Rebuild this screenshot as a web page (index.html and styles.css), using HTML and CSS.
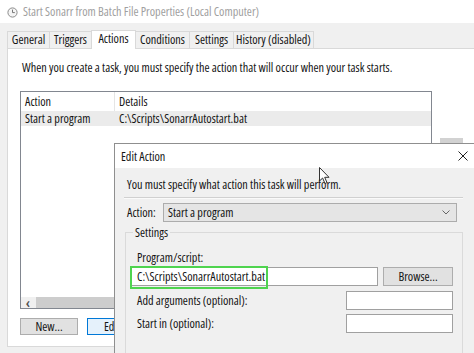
FILE: index.html
```html
<!DOCTYPE html>
<html lang="en">
<head>
    <meta charset="UTF-8">
    <title>Start Sonarr from Batch File Properties</title>
    <link rel="stylesheet" href="styles.css">
</head>
<body>
    <div class="window">
        <div class="titlebar">
            <svg class="clock" width="11" height="11" viewBox="0 0 11 11">
                <circle cx="5.5" cy="5.5" r="4.6" fill="#f4f4f4" stroke="#8a8a8a" stroke-width="1"/>
                <path d="M5.5 2.6 V5.6 H7.8" fill="none" stroke="#777" stroke-width="1"/>
            </svg>
            <span>Start Sonarr from Batch File Properties (Local Computer)</span>
        </div>

        <div class="tabs">
            <div class="tab w-general">General</div>
            <div class="tab w-triggers">Triggers</div>
            <div class="tab active w-actions">Actions</div>
            <div class="tab w-conditions">Conditions</div>
            <div class="tab w-settings">Settings</div>
            <div class="tab w-history">History (disabled)</div>
        </div>

        <div class="panel">
            <p class="intro">When you create a task, you must specify the action that will occur when your task starts.</p>

            <div class="listview">
                <div class="list-header">
                    <div class="col col-action">Action</div>
                    <div class="col col-details">Details</div>
                </div>
                <div class="list-row selected">
                    <div class="col col-action">Start a program</div>
                    <div class="col col-details">C:\Scripts\SonarrAutostart.bat</div>
                </div>
                <div class="list-fill"></div>
                <div class="hscroll">
                    <span class="arrow">&lsaquo;</span>
                    <span class="thumb"></span>
                </div>
            </div>

            <div class="buttons">
                <div class="button">New...</div>
                <div class="button default">Edit...</div>
            </div>

            <!-- top of the move button, mostly hidden by the dialog -->
            <div class="side-button"></div>
        </div>
    </div>

    <div class="dialog">
        <div class="dlg-title">
            <span>Edit Action</span>
            <svg class="close" width="10" height="10" viewBox="0 0 10 10">
                <path d="M0.5 0.5 L9.5 9.5 M9.5 0.5 L0.5 9.5" stroke="#222" stroke-width="1"/>
            </svg>
        </div>
        <div class="dlg-body">
            <p class="dlg-intro">You must specify what action this task will perform.</p>
            <div class="separator"></div>

            <div class="action-row">
                <span class="label">Action:</span>
                <div class="combo">
                    <span>Start a program</span>
                    <svg width="8" height="5" viewBox="0 0 8 5">
                        <path d="M0.5 0.5 L4 4 L7.5 0.5" fill="none" stroke="#666" stroke-width="1"/>
                    </svg>
                </div>
            </div>

            <fieldset class="group">
                <legend>Settings</legend>
                <div class="field-label">Program/script:</div>
                <div class="program-row">
                    <div class="textbox program">C:\Scripts\SonarrAutostart.bat</div>
                    <div class="button browse">Browse...</div>
                    <div class="highlight"></div>
                </div>
                <div class="opt-row">
                    <span>Add arguments (optional):</span>
                    <div class="textbox small"></div>
                </div>
                <div class="opt-row">
                    <span>Start in (optional):</span>
                    <div class="textbox small"></div>
                </div>
            </fieldset>
        </div>
    </div>

    <svg class="cursor" width="12" height="18" viewBox="0 0 12 18">
        <path d="M0.5 0.5 L0.5 14 L3.6 11 L6 16.5 L8 15.6 L5.7 10.3 L10 10.3 Z" fill="#fff" stroke="#333" stroke-width="1"/>
    </svg>
</body>
</html>
```

FILE: styles.css
```css
/* styles.css */

body {
    margin: 0;
    width: 474px;
    height: 353px;
    overflow: hidden;
    position: relative;
    background-color: #f0f0f0;
    font-family: 'Open Sans', 'Noto Sans', sans-serif;
    font-stretch: 75%;
    font-size: 12.2px;
    color: #141414;
}

p {
    margin: 0;
}

.titlebar {
    height: 23px;
    background-color: #fff;
    display: flex;
    align-items: center;
    gap: 5px;
    padding-left: 7px;
    color: #a0a0a0;
    font-size: 12.2px;
}

.clock {
    margin-top: 1px;
}

.tabs {
    display: flex;
    align-items: flex-end;
    margin: 8px 0 0 7px;
    height: 17px;
}

.tab {
    box-sizing: border-box;
    height: 17px;
    line-height: 15px;
    text-align: center;
    background-color: #f0f0f0;
    border: 1px solid #d9d9d9;
    border-bottom: none;
    margin-left: -1px;
}

.tab:first-child {
    margin-left: 0;
}

.tab.active {
    height: 19px;
    line-height: 16px;
    background-color: #fff;
    margin-bottom: -1px;
    position: relative;
    z-index: 1;
}

.w-general { width: 43px; }
.w-triggers { width: 43px; }
.w-actions { width: 45px; }
.w-conditions { width: 55px; }
.w-settings { width: 45px; }
.w-history { width: 81px; }

.panel {
    position: relative;
    height: 299px;
    margin-left: 7px;
    background-color: #fff;
    border: 1px solid #d9d9d9;
    border-right: none;
    padding: 10px 0 0 12px;
    box-sizing: border-box;
}

.intro {
    padding-left: 2px;
    line-height: 17px;
}

.listview {
    margin-top: 15px;
    width: 412px;
    height: 218px;
    box-sizing: border-box;
    border: 1px solid #828790;
    display: flex;
    flex-direction: column;
}

.list-header,
.list-row {
    display: flex;
    line-height: 19px;
}

.list-row {
    line-height: 15px;
}

.list-row.selected {
    background-color: #ebebeb;
}

.col-action {
    width: 94px;
    padding-left: 4px;
    box-sizing: border-box;
}

.list-header .col-action {
    border-right: 1px solid #e5e5e5;
}

.col-details {
    padding-left: 4px;
}

.list-fill {
    flex: 1;
}

.hscroll {
    height: 11px;
    display: flex;
    align-items: center;
    background-color: #f0f0f0;
}

.hscroll .arrow {
    width: 14px;
    text-align: center;
    font-size: 15px;
    font-weight: 600;
    line-height: 11px;
    color: #505050;
}

.hscroll .thumb {
    flex: 1;
    height: 11px;
    margin-left: 1px;
    background-color: #cdcdcd;
}

.buttons {
    display: flex;
    gap: 9px;
    margin-top: 9px;
}

.button {
    width: 58px;
    height: 17px;
    box-sizing: border-box;
    line-height: 15px;
    text-align: center;
    background-color: #e1e1e1;
    border: 1px solid #adadad;
}

.button.default {
    background-color: #e5f1fb;
    border: 1px solid #0078d7;
}

.side-button {
    position: absolute;
    left: 432px;
    top: 89px;
    width: 23px;
    height: 6px;
    background-color: #d2d2d2;
}

.dialog {
    position: absolute;
    left: 114px;
    top: 143px;
    width: 380px;
    height: 230px;
    background-color: #f0f0f0;
    border: 1px solid #8f8f8f;
}

.dlg-title {
    height: 24px;
    background-color: #fff;
    display: flex;
    align-items: center;
    justify-content: space-between;
    padding: 0 27px 0 6px;
}

.dlg-body {
    padding: 9px 0 0 9px;
    width: 339px;
}

.dlg-intro {
    padding-left: 3px;
    line-height: 15px;
}

.separator {
    margin-top: 5px;
    height: 1px;
    background-color: #d0d0d0;
    border-bottom: 1px solid #fafafa;
}

.action-row {
    display: flex;
    align-items: center;
    margin-top: 4px;
}

.action-row .label {
    width: 39px;
    padding-left: 3px;
    box-sizing: border-box;
}

.combo {
    width: 294px;
    height: 19px;
    box-sizing: border-box;
    display: flex;
    align-items: center;
    justify-content: space-between;
    padding: 0 6px 0 4px;
    background-color: #e5e5e5;
    border: 1px solid #acacac;
}

.group {
    margin: 3px 0 0 1px;
    padding: 10px 9px 20px 5px;
    width: 338px;
    box-sizing: border-box;
    border: 1px solid #dadada;
    min-width: 0;
}

.group legend {
    padding: 0 2px;
    margin-left: 2px;
    line-height: 15px;
}

.field-label {
    padding-left: 6px;
    line-height: 15px;
}

.program-row {
    position: relative;
    display: flex;
    justify-content: space-between;
    margin-top: 2px;
}

.textbox {
    height: 19px;
    box-sizing: border-box;
    background-color: #fff;
    border: 1px solid #a0a0a0;
    line-height: 17px;
    padding-left: 5px;
}

.textbox.program {
    width: 247px;
}

.button.browse {
    width: 70px;
    height: 19px;
    line-height: 17px;
}

.highlight {
    position: absolute;
    left: -1px;
    top: -1px;
    width: 138px;
    height: 23px;
    box-sizing: border-box;
    border: 2px solid #4fd44f;
}

.opt-row {
    display: flex;
    align-items: center;
    justify-content: space-between;
    margin-top: 5px;
    padding-left: 6px;
}

.opt-row + .opt-row {
    margin-top: 4px;
}

.textbox.small {
    width: 107px;
}

.cursor {
    position: absolute;
    left: 319px;
    top: 167px;
}
```
